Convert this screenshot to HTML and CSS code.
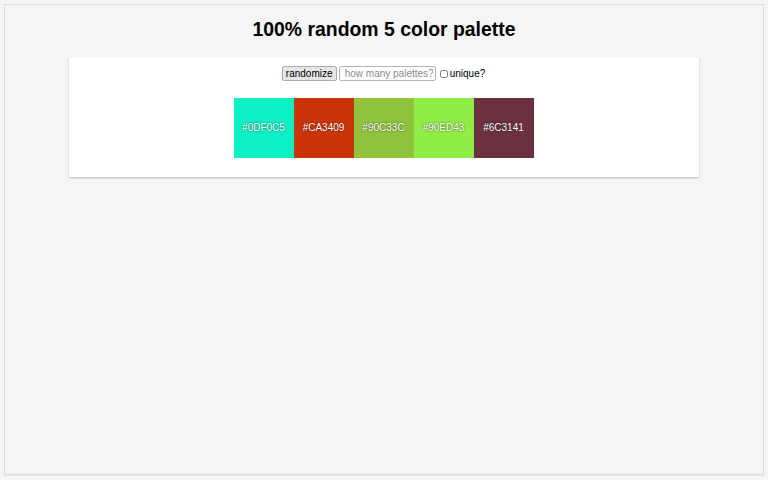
FILE: index.html
```html
<!DOCTYPE html>
<html>
<head>
<meta charset="utf-8">
<title>100% random 5 color palette</title>
<link rel="stylesheet" href="styles.css">
</head>
<body>
<div class="page">
  <h1 class="title">100% random 5 color palette</h1>
  <div class="card">
    <div class="controls">
      <button class="btn">randomize</button>
      <input class="count" type="text" placeholder="how many palettes?">
      <label class="unique"><input type="checkbox" class="check">unique?</label>
    </div>
    <div class="palette">
      <div class="swatch" style="background:#0DF0C5">#0DF0C5</div>
      <div class="swatch" style="background:#CA3409">#CA3409</div>
      <div class="swatch" style="background:#90C33C">#90C33C</div>
      <div class="swatch" style="background:#90ED43">#90ED43</div>
      <div class="swatch" style="background:#6C3141">#6C3141</div>
    </div>
  </div>
</div>
</body>
</html>
```
FILE: styles.css
```css
html, body {
  margin: 0;
  padding: 0;
  background: #f5f5f5;
}
body {
  padding: 4px;
  font-family: "Liberation Sans", Arial, sans-serif;
}
.page {
  box-sizing: border-box;
  width: 760px;
  height: 471px;
  border: 1px solid #dcdcdc;
  background: #f5f5f5;
  box-shadow: 0 1px 1px rgba(0,0,0,0.05);
  display: flex;
  flex-direction: column;
  align-items: center;
}
.title {
  margin: 13px 0 0;
  font-size: 19.4px;
  line-height: 23px;
  font-weight: bold;
  color: #000;
}
.card {
  box-sizing: border-box;
  margin-top: 16px;
  width: 630px;
  margin-left: -1px;
  background: #fff;
  box-shadow: 0 1px 2px rgba(0,0,0,0.25);
  padding: 9px 0 19px;
  display: flex;
  flex-direction: column;
  align-items: center;
}
.controls {
  display: flex;
  align-items: center;
  font-size: 10px;
  height: 15px;
}
.btn {
  box-sizing: border-box;
  height: 15px;
  width: 55px;
  padding: 0;
  font-family: "Liberation Sans", Arial, sans-serif;
  font-size: 10px;
  color: #000;
  background: #e6e6e6;
  border: 1px solid #adadad;
  border-radius: 2px;
}
.count {
  box-sizing: border-box;
  margin-left: 2px;
  height: 15px;
  width: 97px;
  padding: 0 2px 0 5px;
  font-family: "Liberation Sans", Arial, sans-serif;
  font-size: 10px;
  border: 1px solid #b5b5b5;
  border-radius: 2px;
}
.count::placeholder {
  color: #8a8a8a;
}
.unique {
  display: flex;
  align-items: center;
  margin-left: 4px;
  font-size: 10px;
  color: #000;
}
.check {
  margin: 0 2px 0 0;
  width: 8px;
  height: 8px;
}
.palette {
  display: flex;
  margin-top: 17px;
}
.swatch {
  width: 60px;
  height: 60px;
  box-sizing: border-box;
  padding-bottom: 2px;
  display: flex;
  align-items: center;
  justify-content: center;
  color: #fff;
  font-size: 10px;
  text-shadow: 0 0 2px rgba(0,0,0,0.75);
}
```
